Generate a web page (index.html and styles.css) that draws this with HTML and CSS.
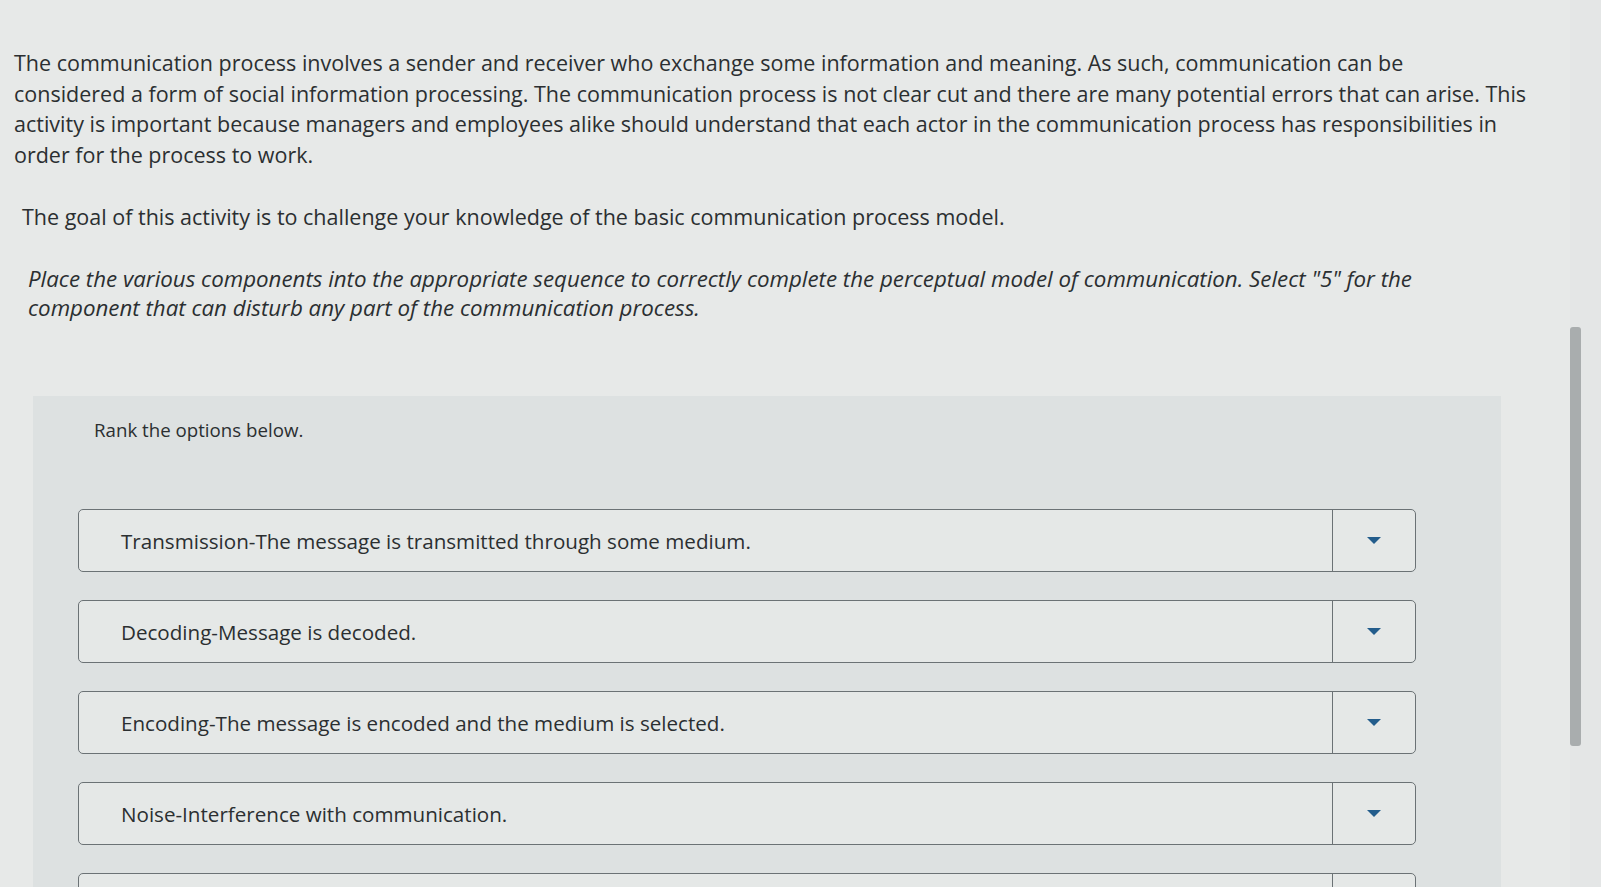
FILE: index.html
```
<!DOCTYPE html>
<html lang="en">
<head>
<meta charset="UTF-8">
<title>Rank the options</title>
<link rel="stylesheet" href="styles.css">
</head>
<body>

<div class="page">
  <div class="content">
    <p class="intro">The communication process involves a sender and receiver who exchange some information and meaning. As such, communication can be<br>
    considered a form of social information processing. The communication process is not clear cut and there are many potential errors that can arise. This<br>
    activity is important because managers and employees alike should understand that each actor in the communication process has responsibilities in<br>
    order for the process to work.</p>

    <p class="goal">The goal of this activity is to challenge your knowledge of the basic communication process model.</p>

    <p class="prompt">Place the various components into the appropriate sequence to correctly complete the perceptual model of communication. Select "5" for the<br>
    component that can disturb any part of the communication process.</p>

    <div class="rank-box">
      <div class="rank-label">Rank the options below.</div>
      <div class="rank-list">
        <div class="rank-item">
          <div class="rank-text">Transmission-The message is transmitted through some medium.</div>
          <div class="rank-select"><span class="caret"></span></div>
        </div>
        <div class="rank-item">
          <div class="rank-text">Decoding-Message is decoded.</div>
          <div class="rank-select"><span class="caret"></span></div>
        </div>
        <div class="rank-item">
          <div class="rank-text">Encoding-The message is encoded and the medium is selected.</div>
          <div class="rank-select"><span class="caret"></span></div>
        </div>
        <div class="rank-item">
          <div class="rank-text">Noise-Interference with communication.</div>
          <div class="rank-select"><span class="caret"></span></div>
        </div>
        <div class="rank-item">
          <div class="rank-text"></div>
          <div class="rank-select"><span class="caret"></span></div>
        </div>
      </div>
    </div>
  </div>
  <div class="scroll-track"><div class="scroll-thumb"></div></div>
</div>

</body>
</html>
```
FILE: styles.css
```
* {
  box-sizing: border-box;
}

body {
  margin: 0;
  background: #e7e9e8;
  font-family: 'Open Sans', Lato, sans-serif;
  color: #2b2f31;
  overflow: hidden;
  height: 887px;
}

.page {
  display: flex;
  height: 887px;
}

.content {
  flex: 1;
  padding: 48px 0 0 14px;
  overflow: hidden;
}

p {
  margin: 0;
  font-size: 21.5px;
  line-height: 30.6px;
  white-space: nowrap;
}

.intro {
  margin-bottom: 32px;
}

.goal {
  margin-left: 8px;
  margin-bottom: 31px;
}

.prompt {
  margin-left: 14px;
  font-style: italic;
  font-size: 22.3px;
  line-height: 29.5px;
}

.rank-box {
  margin: 73px 0 0 19px;
  width: 1468px;
  background: #dde1e1;
  padding: 22px 0 0 45px;
  height: 500px;
}

.rank-label {
  font-size: 18.7px;
  line-height: 24px;
  padding-left: 16px;
  margin-bottom: 67px;
}

.rank-list {
  display: flex;
  flex-direction: column;
  gap: 27.7px;
}

.rank-item {
  display: flex;
  width: 1338px;
  height: 63.3px;
  flex-shrink: 0;
  border: 1px solid #6b7275;
  border-radius: 5px;
  background: #e5e8e7;
}

.rank-text {
  flex: 1;
  display: flex;
  align-items: center;
  padding-left: 42px;
  font-size: 20.6px;
  border-right: 1px solid #6b7275;
}

.rank-select {
  width: 82px;
  display: flex;
  align-items: center;
  justify-content: center;
}

.caret {
  width: 0;
  height: 0;
  border-left: 7px solid transparent;
  border-right: 7px solid transparent;
  border-top: 7px solid #235d8c;
}

.scroll-track {
  width: 31px;
  position: relative;
  background: #e4e6e6;
}

.scroll-thumb {
  position: absolute;
  left: 0;
  top: 327px;
  width: 11px;
  height: 419px;
  background: #a9adae;
  border-radius: 3px;
}
```
